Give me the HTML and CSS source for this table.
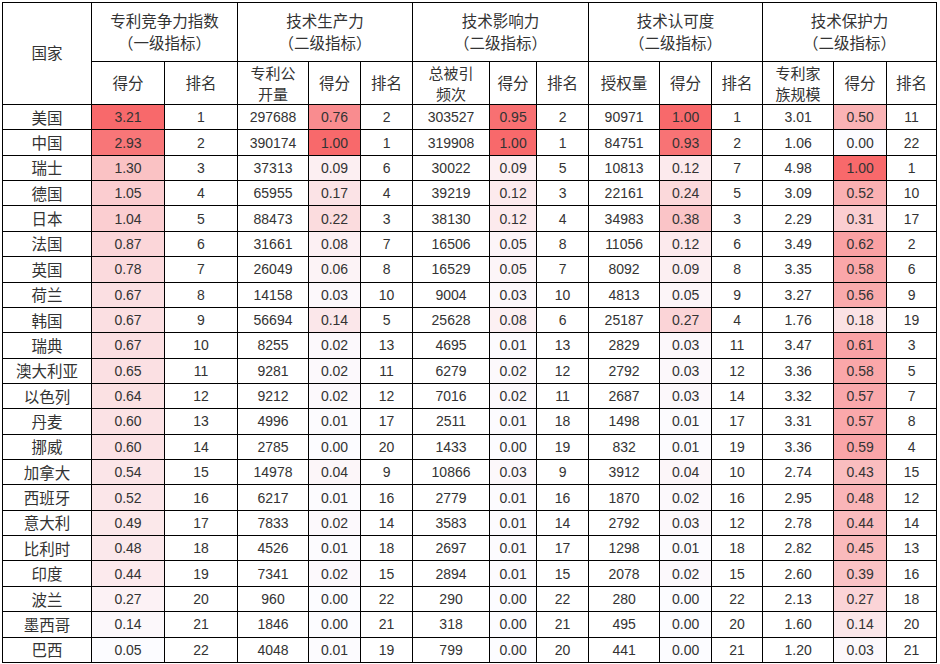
FILE: index.html
```html
<!DOCTYPE html>
<html lang="zh-CN">
<head>
<meta charset="utf-8">
<title>专利竞争力指数</title>
<link rel="stylesheet" href="styles.css">
</head>
<body>
<table class="grid">
  <colgroup>
    <col class="w89"><col class="w73"><col class="w73">
    <col class="w71"><col class="w52"><col class="w52">
    <col class="w77"><col class="w47"><col class="w52">
    <col class="w71"><col class="w52"><col class="w51">
    <col class="w71"><col class="w53"><col class="w50">
  </colgroup>
  <thead>
    <tr class="hr1">
      <th rowspan="2" class="country">国家</th>
      <th colspan="2">专利竞争力指数<br>（一级指标）</th>
      <th colspan="3">技术生产力<br>（二级指标）</th>
      <th colspan="3">技术影响力<br>（二级指标）</th>
      <th colspan="3">技术认可度<br>（二级指标）</th>
      <th colspan="3">技术保护力<br>（二级指标）</th>
    </tr>
    <tr class="hr2">
      <th>得分</th><th>排名</th>
      <th class="t2">专利公<br>开量</th><th>得分</th><th>排名</th>
      <th class="t2">总被引<br>频次</th><th>得分</th><th>排名</th>
      <th>授权量</th><th>得分</th><th>排名</th>
      <th class="t2">专利家<br>族规模</th><th>得分</th><th>排名</th>
    </tr>
  </thead>
  <tbody>
    <tr><td class="cn">美国</td><td class="h1" style="--v:3.21">3.21</td><td>1</td><td>297688</td><td class="h" style="--v:0.76">0.76</td><td>2</td><td>303527</td><td class="h" style="--v:0.95">0.95</td><td>2</td><td>90971</td><td class="h" style="--v:1.00">1.00</td><td>1</td><td>3.01</td><td class="h" style="--v:0.50">0.50</td><td>11</td></tr>
    <tr><td class="cn">中国</td><td class="h1" style="--v:2.93">2.93</td><td>2</td><td>390174</td><td class="h" style="--v:1.00">1.00</td><td>1</td><td>319908</td><td class="h" style="--v:1.00">1.00</td><td>1</td><td>84751</td><td class="h" style="--v:0.93">0.93</td><td>2</td><td>1.06</td><td class="h" style="--v:0.00">0.00</td><td>22</td></tr>
    <tr><td class="cn">瑞士</td><td class="h1" style="--v:1.30">1.30</td><td>3</td><td>37313</td><td class="h" style="--v:0.09">0.09</td><td>6</td><td>30022</td><td class="h" style="--v:0.09">0.09</td><td>5</td><td>10813</td><td class="h" style="--v:0.12">0.12</td><td>7</td><td>4.98</td><td class="h" style="--v:1.00">1.00</td><td>1</td></tr>
    <tr><td class="cn">德国</td><td class="h1" style="--v:1.05">1.05</td><td>4</td><td>65955</td><td class="h" style="--v:0.17">0.17</td><td>4</td><td>39219</td><td class="h" style="--v:0.12">0.12</td><td>3</td><td>22161</td><td class="h" style="--v:0.24">0.24</td><td>5</td><td>3.09</td><td class="h" style="--v:0.52">0.52</td><td>10</td></tr>
    <tr><td class="cn">日本</td><td class="h1" style="--v:1.04">1.04</td><td>5</td><td>88473</td><td class="h" style="--v:0.22">0.22</td><td>3</td><td>38130</td><td class="h" style="--v:0.12">0.12</td><td>4</td><td>34983</td><td class="h" style="--v:0.38">0.38</td><td>3</td><td>2.29</td><td class="h" style="--v:0.31">0.31</td><td>17</td></tr>
    <tr><td class="cn">法国</td><td class="h1" style="--v:0.87">0.87</td><td>6</td><td>31661</td><td class="h" style="--v:0.08">0.08</td><td>7</td><td>16506</td><td class="h" style="--v:0.05">0.05</td><td>8</td><td>11056</td><td class="h" style="--v:0.12">0.12</td><td>6</td><td>3.49</td><td class="h" style="--v:0.62">0.62</td><td>2</td></tr>
    <tr><td class="cn">英国</td><td class="h1" style="--v:0.78">0.78</td><td>7</td><td>26049</td><td class="h" style="--v:0.06">0.06</td><td>8</td><td>16529</td><td class="h" style="--v:0.05">0.05</td><td>7</td><td>8092</td><td class="h" style="--v:0.09">0.09</td><td>8</td><td>3.35</td><td class="h" style="--v:0.58">0.58</td><td>6</td></tr>
    <tr><td class="cn">荷兰</td><td class="h1" style="--v:0.67">0.67</td><td>8</td><td>14158</td><td class="h" style="--v:0.03">0.03</td><td>10</td><td>9004</td><td class="h" style="--v:0.03">0.03</td><td>10</td><td>4813</td><td class="h" style="--v:0.05">0.05</td><td>9</td><td>3.27</td><td class="h" style="--v:0.56">0.56</td><td>9</td></tr>
    <tr><td class="cn">韩国</td><td class="h1" style="--v:0.67">0.67</td><td>9</td><td>56694</td><td class="h" style="--v:0.14">0.14</td><td>5</td><td>25628</td><td class="h" style="--v:0.08">0.08</td><td>6</td><td>25187</td><td class="h" style="--v:0.27">0.27</td><td>4</td><td>1.76</td><td class="h" style="--v:0.18">0.18</td><td>19</td></tr>
    <tr><td class="cn">瑞典</td><td class="h1" style="--v:0.67">0.67</td><td>10</td><td>8255</td><td class="h" style="--v:0.02">0.02</td><td>13</td><td>4695</td><td class="h" style="--v:0.01">0.01</td><td>13</td><td>2829</td><td class="h" style="--v:0.03">0.03</td><td>11</td><td>3.47</td><td class="h" style="--v:0.61">0.61</td><td>3</td></tr>
    <tr><td class="cn">澳大利亚</td><td class="h1" style="--v:0.65">0.65</td><td>11</td><td>9281</td><td class="h" style="--v:0.02">0.02</td><td>11</td><td>6279</td><td class="h" style="--v:0.02">0.02</td><td>12</td><td>2792</td><td class="h" style="--v:0.03">0.03</td><td>12</td><td>3.36</td><td class="h" style="--v:0.58">0.58</td><td>5</td></tr>
    <tr><td class="cn">以色列</td><td class="h1" style="--v:0.64">0.64</td><td>12</td><td>9212</td><td class="h" style="--v:0.02">0.02</td><td>12</td><td>7016</td><td class="h" style="--v:0.02">0.02</td><td>11</td><td>2687</td><td class="h" style="--v:0.03">0.03</td><td>14</td><td>3.32</td><td class="h" style="--v:0.57">0.57</td><td>7</td></tr>
    <tr><td class="cn">丹麦</td><td class="h1" style="--v:0.60">0.60</td><td>13</td><td>4996</td><td class="h" style="--v:0.01">0.01</td><td>17</td><td>2511</td><td class="h" style="--v:0.01">0.01</td><td>18</td><td>1498</td><td class="h" style="--v:0.01">0.01</td><td>17</td><td>3.31</td><td class="h" style="--v:0.57">0.57</td><td>8</td></tr>
    <tr><td class="cn">挪威</td><td class="h1" style="--v:0.60">0.60</td><td>14</td><td>2785</td><td class="h" style="--v:0.00">0.00</td><td>20</td><td>1433</td><td class="h" style="--v:0.00">0.00</td><td>19</td><td>832</td><td class="h" style="--v:0.01">0.01</td><td>19</td><td>3.36</td><td class="h" style="--v:0.59">0.59</td><td>4</td></tr>
    <tr><td class="cn">加拿大</td><td class="h1" style="--v:0.54">0.54</td><td>15</td><td>14978</td><td class="h" style="--v:0.04">0.04</td><td>9</td><td>10866</td><td class="h" style="--v:0.03">0.03</td><td>9</td><td>3912</td><td class="h" style="--v:0.04">0.04</td><td>10</td><td>2.74</td><td class="h" style="--v:0.43">0.43</td><td>15</td></tr>
    <tr><td class="cn">西班牙</td><td class="h1" style="--v:0.52">0.52</td><td>16</td><td>6217</td><td class="h" style="--v:0.01">0.01</td><td>16</td><td>2779</td><td class="h" style="--v:0.01">0.01</td><td>16</td><td>1870</td><td class="h" style="--v:0.02">0.02</td><td>16</td><td>2.95</td><td class="h" style="--v:0.48">0.48</td><td>12</td></tr>
    <tr><td class="cn">意大利</td><td class="h1" style="--v:0.49">0.49</td><td>17</td><td>7833</td><td class="h" style="--v:0.02">0.02</td><td>14</td><td>3583</td><td class="h" style="--v:0.01">0.01</td><td>14</td><td>2792</td><td class="h" style="--v:0.03">0.03</td><td>12</td><td>2.78</td><td class="h" style="--v:0.44">0.44</td><td>14</td></tr>
    <tr><td class="cn">比利时</td><td class="h1" style="--v:0.48">0.48</td><td>18</td><td>4526</td><td class="h" style="--v:0.01">0.01</td><td>18</td><td>2697</td><td class="h" style="--v:0.01">0.01</td><td>17</td><td>1298</td><td class="h" style="--v:0.01">0.01</td><td>18</td><td>2.82</td><td class="h" style="--v:0.45">0.45</td><td>13</td></tr>
    <tr><td class="cn">印度</td><td class="h1" style="--v:0.44">0.44</td><td>19</td><td>7341</td><td class="h" style="--v:0.02">0.02</td><td>15</td><td>2894</td><td class="h" style="--v:0.01">0.01</td><td>15</td><td>2078</td><td class="h" style="--v:0.02">0.02</td><td>15</td><td>2.60</td><td class="h" style="--v:0.39">0.39</td><td>16</td></tr>
    <tr><td class="cn">波兰</td><td class="h1" style="--v:0.27">0.27</td><td>20</td><td>960</td><td class="h" style="--v:0.00">0.00</td><td>22</td><td>290</td><td class="h" style="--v:0.00">0.00</td><td>22</td><td>280</td><td class="h" style="--v:0.00">0.00</td><td>22</td><td>2.13</td><td class="h" style="--v:0.27">0.27</td><td>18</td></tr>
    <tr><td class="cn">墨西哥</td><td class="h1" style="--v:0.14">0.14</td><td>21</td><td>1846</td><td class="h" style="--v:0.00">0.00</td><td>21</td><td>318</td><td class="h" style="--v:0.00">0.00</td><td>21</td><td>495</td><td class="h" style="--v:0.00">0.00</td><td>20</td><td>1.60</td><td class="h" style="--v:0.14">0.14</td><td>20</td></tr>
    <tr><td class="cn">巴西</td><td class="h1" style="--v:0.05">0.05</td><td>22</td><td>4048</td><td class="h" style="--v:0.01">0.01</td><td>19</td><td>799</td><td class="h" style="--v:0.00">0.00</td><td>20</td><td>441</td><td class="h" style="--v:0.00">0.00</td><td>21</td><td>1.20</td><td class="h" style="--v:0.03">0.03</td><td>21</td></tr>
  </tbody>
</table>
</body>
</html>
```

FILE: styles.css
```css
html, body {
  margin: 0;
  padding: 0;
  background: #ffffff;
}

body {
  padding: 2px 0 0 2px;
}

.grid {
  border-collapse: collapse;
  table-layout: fixed;
  width: 935px;
  color: #333333;
  font-family: "Liberation Sans", "Noto Sans CJK SC", sans-serif;
  font-size: 14px;
}

.w89 { width: 89px; }
.w73 { width: 73px; }
.w71 { width: 71px; }
.w77 { width: 77px; }
.w53 { width: 53px; }
.w52 { width: 52px; }
.w51 { width: 51px; }
.w50 { width: 50px; }
.w47 { width: 47px; }

.grid th,
.grid td {
  border: 1px solid #000000;
  padding: 0;
  text-align: center;
  vertical-align: middle;
  white-space: nowrap;
  overflow: hidden;
}

.grid th {
  font-family: "Noto Sans CJK SC", sans-serif;
  font-weight: normal;
  font-size: 15.5px;
  padding-bottom: 2px;
}

.grid th.country {
  padding-bottom: 4px;
}

.hr1 { height: 59px; }
.hr1 th { line-height: 22px; }
.hr2 { height: 42px; }
.hr2 th { line-height: 22px; }
.hr2 th.t2 {
  font-size: 15px;
  line-height: 21px;
  padding-bottom: 0;
}

.grid tbody tr { height: 25.36px; }
.grid td { line-height: 18px; }

.grid td.cn {
  font-family: "Noto Sans CJK SC", sans-serif;
  font-size: 15.5px;
  padding-bottom: 1px;
}

.grid td.h {
  background: color-mix(in srgb, #f8696b calc(var(--v) * 100%), #fcfcff);
}

.grid td.h1 {
  background: color-mix(in srgb, #f8696b calc((var(--v) - 0.05) / 3.16 * 100%), #fcfcff);
}
```
